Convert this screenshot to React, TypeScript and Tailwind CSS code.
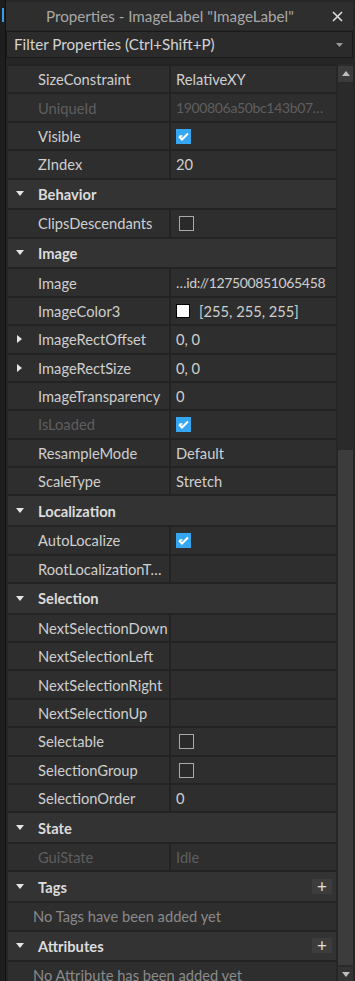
import type { ReactNode } from 'react'

type Prop = {
  kind: 'prop'
  label: string
  value?: ReactNode
  dim?: boolean
  expand?: boolean
  tight?: boolean
}
type Head = { kind: 'head'; label: string; plus?: boolean }
type Note = { kind: 'note'; text: string }
type Row = Prop | Head | Note

function CheckOn() {
  return (
    <span className="mt-[1px] flex h-[15px] w-[15px] items-center justify-center bg-[#35a7f2]">
      <svg width="11" height="9" viewBox="0 0 11 9">
        <path d="M1 4.5 L4 7.5 L10 1.5" stroke="#fff" strokeWidth="2" fill="none" />
        <path d="M1.5 4 L4.5 4" stroke="#fff" strokeWidth="1.5" />
      </svg>
    </span>
  )
}

function CheckOff() {
  return <span className="mt-[1px] ml-[3px] block h-[15px] w-[15px] border border-[#a9a9a9] bg-[#2a2a2a]" />
}

const rows: Row[] = [
  { kind: 'prop', label: 'SizeConstraint', value: 'RelativeXY' },
  { kind: 'prop', label: 'UniqueId', value: '1900806a50bc143b07…', dim: true, tight: true },
  { kind: 'prop', label: 'Visible', value: <CheckOn /> },
  { kind: 'prop', label: 'ZIndex', value: '20' },
  { kind: 'head', label: 'Behavior' },
  { kind: 'prop', label: 'ClipsDescendants', value: <CheckOff /> },
  { kind: 'head', label: 'Image' },
  { kind: 'prop', label: 'Image', value: '…id://127500851065458', tight: true },
  {
    kind: 'prop',
    label: 'ImageColor3',
    value: (
      <span className="flex items-center">
        <span className="block h-[14px] w-[14px] border border-black bg-white" />
        <span className="ml-[9px]">[255, 255, 255]</span>
      </span>
    ),
  },
  { kind: 'prop', label: 'ImageRectOffset', value: '0, 0', expand: true },
  { kind: 'prop', label: 'ImageRectSize', value: '0, 0', expand: true },
  { kind: 'prop', label: 'ImageTransparency', value: '0' },
  { kind: 'prop', label: 'IsLoaded', value: <CheckOn />, dim: true },
  { kind: 'prop', label: 'ResampleMode', value: 'Default' },
  { kind: 'prop', label: 'ScaleType', value: 'Stretch' },
  { kind: 'head', label: 'Localization' },
  { kind: 'prop', label: 'AutoLocalize', value: <CheckOn /> },
  { kind: 'prop', label: 'RootLocalizationT…' },
  { kind: 'head', label: 'Selection' },
  { kind: 'prop', label: 'NextSelectionDown' },
  { kind: 'prop', label: 'NextSelectionLeft' },
  { kind: 'prop', label: 'NextSelectionRight' },
  { kind: 'prop', label: 'NextSelectionUp' },
  { kind: 'prop', label: 'Selectable', value: <CheckOff /> },
  { kind: 'prop', label: 'SelectionGroup', value: <CheckOff /> },
  { kind: 'prop', label: 'SelectionOrder', value: '0' },
  { kind: 'head', label: 'State' },
  { kind: 'prop', label: 'GuiState', value: 'Idle', dim: true },
  { kind: 'head', label: 'Tags', plus: true },
  { kind: 'note', text: 'No Tags have been added yet' },
  { kind: 'head', label: 'Attributes', plus: true },
  { kind: 'note', text: 'No Attribute has been added yet' },
]

function RowView({ row }: { row: Row }) {
  if (row.kind === 'head') {
    return (
      <div className="flex h-[30.7px] shrink-0 items-center border-b-2 border-[#232323] bg-[#333333]">
        <svg width="8" height="5" viewBox="0 0 8 5" className="ml-[8px]">
          <path d="M0 0 H8 L4 5 Z" fill="#e6e6e6" />
        </svg>
        <span className="ml-[14px] text-[14.7px] font-bold text-[#dcdcdc]">{row.label}</span>
        {row.plus && (
          <span className="ml-auto mr-[4px] flex h-[15px] w-[20px] items-center justify-center bg-[#3c3c3c] text-[17px] leading-none text-[#e0e0e0]">
            +
          </span>
        )}
      </div>
    )
  }
  if (row.kind === 'note') {
    return (
      <div className="flex h-[28.4px] shrink-0 items-center border-b-2 border-[#232323] bg-[#2e2e2e] pl-[25px] text-[14.7px] text-[#8a8a8a]">
        {row.text}
      </div>
    )
  }
  const text = row.dim ? 'text-[#5e5e5e]' : 'text-[#cfcfcf]'
  return (
    <div className="flex h-[28.4px] shrink-0 border-b-2 border-[#232323] bg-[#2e2e2e] text-[14.7px]">
      <div className={`flex w-[163px] shrink-0 items-center border-r-2 border-[#232323] ${text}`}>
        <span className="flex w-[30px] shrink-0 items-center pl-[9px]">
          {row.expand && (
            <svg width="5" height="8" viewBox="0 0 5 8">
              <path d="M0 0 L5 4 L0 8 Z" fill="#e6e6e6" />
            </svg>
          )}
        </span>
        <span className="whitespace-nowrap">{row.label}</span>
      </div>
      <div className={`flex min-w-0 flex-1 items-center overflow-hidden pl-[5px] ${text}`}>
        {typeof row.value === 'string' ? (
          <span className={`whitespace-nowrap ${row.tight ? 'text-[14px] tracking-[-0.35px]' : ''}`}>{row.value}</span>
        ) : (
          row.value
        )}
      </div>
    </div>
  )
}

export default function App() {
  return (
    <div className="flex h-[981px] w-[355px] overflow-hidden bg-[#1c1c1c] font-['Lato',sans-serif]">
      <div className="w-[5px] shrink-0 bg-[#1e1e1e] pt-[8px]">
        <div className="ml-[2px] h-[14px] w-[2px] bg-[#3b9ae8]" />
      </div>
      <div className="flex min-w-0 flex-1 flex-col border-l border-[#111111] bg-[#262626] pr-[2px]">
        <div className="mt-[2px] flex h-[28px] shrink-0 items-center bg-[#2e2e2e]">
          <span className="ml-[40px] text-[15.2px] text-[#a8a8a8]">Properties - ImageLabel "ImageLabel"</span>
          <svg width="11" height="11" viewBox="0 0 11 11" className="ml-auto mr-[10px]">
            <path d="M1 1 L10 10 M10 1 L1 10" stroke="#dcdcdc" strokeWidth="1.6" />
          </svg>
        </div>
        <div className="mt-[1px] flex h-[27px] shrink-0 items-center border border-[#1a1a1a] bg-[#2b2b2b] pl-[7px]">
          <span className="text-[15.2px] text-[#d4d4d4]">Filter Properties (Ctrl+Shift+P)</span>
          <svg width="7" height="4" viewBox="0 0 7 4" className="ml-auto mr-[9px]">
            <path d="M0 0 H7 L3.5 4 Z" fill="#9a9a9a" />
          </svg>
        </div>
        <div className="mt-[6px] flex min-h-0 flex-1">
          <div className="ml-[2px] flex min-w-0 flex-1 flex-col border-t-2 border-[#232323]">
            {rows.map((r, i) => (
              <RowView key={i} row={r} />
            ))}
          </div>
          <div className="ml-[2px] flex w-[15px] shrink-0 flex-col bg-[#2a2a2a]">
            <div className="mt-[2px] flex h-[16px] items-center justify-center bg-[#3b3b3b]">
              <svg width="8" height="5" viewBox="0 0 8 5">
                <path d="M0 5 H8 L4 0 Z" fill="#bdbdbd" />
              </svg>
            </div>
            <div className="mt-[368px] h-[520px] bg-[#3c3c3c]" />
            <div className="mt-[2px] flex h-[14px] items-center justify-center bg-[#333333]">
              <svg width="8" height="5" viewBox="0 0 8 5">
                <path d="M0 0 H8 L4 5 Z" fill="#bdbdbd" />
              </svg>
            </div>
          </div>
        </div>
      </div>
    </div>
  )
}
